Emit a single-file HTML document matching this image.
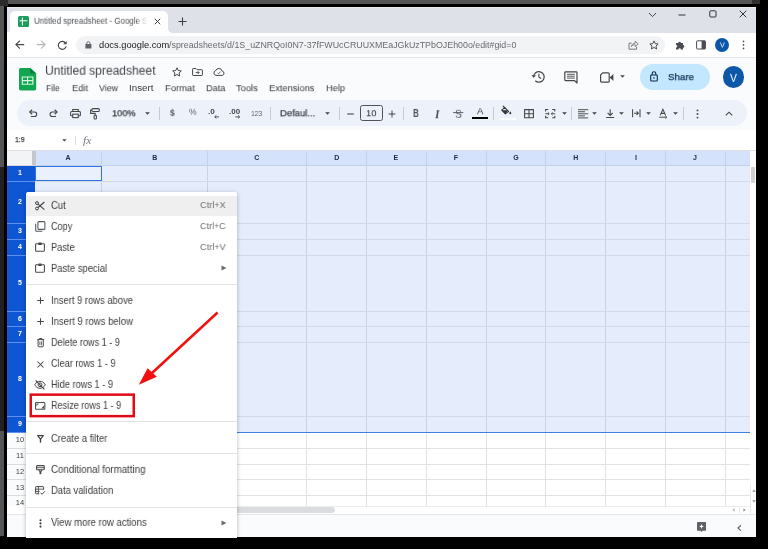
<!DOCTYPE html>
<html><head><meta charset="utf-8"><title>Untitled spreadsheet - Google Sheets</title>
<style>
html,body{margin:0;padding:0}
body{width:768px;height:549px;background:#000;overflow:hidden;position:relative;font-family:"Liberation Sans",sans-serif}
.a{position:absolute}
.tx{will-change:transform;position:absolute;white-space:nowrap;transform:translateY(-50%);line-height:1;font-family:"Liberation Sans",sans-serif}
svg{position:absolute;overflow:visible}
.hl{position:absolute;height:1px;background:#dfe3ea}
.vl{position:absolute;width:1px;background:#dfe3ea}
.rh{will-change:transform;position:absolute;left:6.2px;width:28px;background:#0b57d0;color:#fff;font-size:7px;font-weight:700;text-align:center}
.rn{will-change:transform;position:absolute;left:6.4px;width:28px;color:#444;font-size:7.5px;text-align:center}
.ch{will-change:transform;position:absolute;top:151px;height:14px;color:#1f2a3d;font-size:7px;font-weight:700;text-align:center;line-height:14px}
.sep{position:absolute;top:107px;width:1px;height:13px;background:#c7cbd1}
.serifi{font-family:"Liberation Serif",serif;font-style:italic}
.stk{-webkit-text-stroke:0.25px currentColor}
.msep{position:absolute;left:26px;width:211px;height:1px;background:#e3e3e3}
</style></head><body>
<!-- outer frame -->
<div class="a" style="left:0;top:0;width:8px;height:6px;background:#2b2b2b"></div>
<div class="a" style="left:8px;top:0;width:744px;height:3.8px;background:#555"></div>
<div class="a" style="left:752px;top:0;width:8px;height:4px;background:#2f3030"></div>
<div class="a" style="left:0;top:6px;width:3.8px;height:530px;background:#555"></div>
<div class="a" style="left:0;top:167px;width:4px;height:263.5px;background:#212121"></div>
<!-- window -->
<div class="a" id="win" style="left:6.8px;top:6.7px;width:749.3px;height:530.1px;background:#fff;overflow:hidden"></div>
<!-- tab strip -->
<div class="a" style="left:6.8px;top:6.7px;width:749.3px;height:26.3px;background:#dfe1e8"></div>
<div class="a" style="left:6.8px;top:6.7px;width:749.3px;height:1.2px;background:#eaecf0"></div>
<div class="a" style="left:10px;top:11px;width:158px;height:22px;background:#fff;border-radius:5px 5px 0 0"></div>
<div class="a" style="left:6.8px;top:29px;width:3.2px;height:4px;background:radial-gradient(circle at 0 0,#dfe1e8 3.2px,#fff 3.7px)"></div>
<div class="a" style="left:168px;top:29px;width:4px;height:4px;background:radial-gradient(circle at 100% 0,#dfe1e8 3.5px,#fff 4px)"></div>
<!-- chrome toolbar -->
<div class="a" style="left:6.8px;top:33px;width:749.3px;height:24px;background:#fff"></div>
<div class="a" style="left:7px;top:57px;width:749px;height:1px;background:#e4e6ea"></div>
<div class="a" style="left:76px;top:36px;width:589px;height:18px;background:#f1f3f4;border-radius:9px"></div>
<!-- sheets header -->
<div class="a" style="left:6.8px;top:58px;width:749.3px;height:72px;background:#f9fbfd"></div>
<div class="a" style="left:17px;top:100px;width:730px;height:26px;background:#edf2fa;border-radius:13px"></div>
<!-- formula bar -->
<div class="a" style="left:7px;top:130px;width:749px;height:20px;background:#fff"></div>
<div class="a" style="left:7px;top:150px;width:749px;height:1px;background:#dcdfe4"></div>
<div class="a" style="left:35px;top:165px;width:715px;height:267px;background:#e5edfd"></div>
<div class="a" style="left:35px;top:151px;width:715px;height:14px;background:#d4e2fb"></div>
<div class="a" style="left:7px;top:151px;width:28px;height:14px;background:#f3f4f6"></div>
<div class="a" style="left:32.4px;top:151px;width:3.2px;height:14.5px;background:#c4c7cc"></div>
<div class="a" style="left:7px;top:164.5px;width:28px;height:1px;background:#d3d6da"></div>
<div class="ch" style="left:35.4px;width:66.19999999999999px">A</div>
<div class="ch" style="left:101.6px;width:105.4px">B</div>
<div class="ch" style="left:207.0px;width:99.60000000000002px">C</div>
<div class="ch" style="left:306.6px;width:59.799999999999955px">D</div>
<div class="ch" style="left:366.4px;width:59.80000000000001px">E</div>
<div class="ch" style="left:426.2px;width:59.80000000000001px">F</div>
<div class="ch" style="left:486.0px;width:59.799999999999955px">G</div>
<div class="ch" style="left:545.8px;width:59.80000000000007px">H</div>
<div class="ch" style="left:605.6px;width:59.799999999999955px">I</div>
<div class="ch" style="left:665.4px;width:59.80000000000007px">J</div>
<div class="vl" style="left:101.1px;top:151px;height:14px;background:#c6d1e9"></div>
<div class="vl" style="left:101.1px;top:165px;height:267px;background:#cad3e6"></div>
<div class="vl" style="left:101.1px;top:433px;height:74px;background:#e2e3e5"></div>
<div class="vl" style="left:206.5px;top:151px;height:14px;background:#c6d1e9"></div>
<div class="vl" style="left:206.5px;top:165px;height:267px;background:#cad3e6"></div>
<div class="vl" style="left:206.5px;top:433px;height:74px;background:#e2e3e5"></div>
<div class="vl" style="left:306.1px;top:151px;height:14px;background:#c6d1e9"></div>
<div class="vl" style="left:306.1px;top:165px;height:267px;background:#cad3e6"></div>
<div class="vl" style="left:306.1px;top:433px;height:74px;background:#e2e3e5"></div>
<div class="vl" style="left:365.9px;top:151px;height:14px;background:#c6d1e9"></div>
<div class="vl" style="left:365.9px;top:165px;height:267px;background:#cad3e6"></div>
<div class="vl" style="left:365.9px;top:433px;height:74px;background:#e2e3e5"></div>
<div class="vl" style="left:425.7px;top:151px;height:14px;background:#c6d1e9"></div>
<div class="vl" style="left:425.7px;top:165px;height:267px;background:#cad3e6"></div>
<div class="vl" style="left:425.7px;top:433px;height:74px;background:#e2e3e5"></div>
<div class="vl" style="left:485.5px;top:151px;height:14px;background:#c6d1e9"></div>
<div class="vl" style="left:485.5px;top:165px;height:267px;background:#cad3e6"></div>
<div class="vl" style="left:485.5px;top:433px;height:74px;background:#e2e3e5"></div>
<div class="vl" style="left:545.3px;top:151px;height:14px;background:#c6d1e9"></div>
<div class="vl" style="left:545.3px;top:165px;height:267px;background:#cad3e6"></div>
<div class="vl" style="left:545.3px;top:433px;height:74px;background:#e2e3e5"></div>
<div class="vl" style="left:605.1px;top:151px;height:14px;background:#c6d1e9"></div>
<div class="vl" style="left:605.1px;top:165px;height:267px;background:#cad3e6"></div>
<div class="vl" style="left:605.1px;top:433px;height:74px;background:#e2e3e5"></div>
<div class="vl" style="left:664.9px;top:151px;height:14px;background:#c6d1e9"></div>
<div class="vl" style="left:664.9px;top:165px;height:267px;background:#cad3e6"></div>
<div class="vl" style="left:664.9px;top:433px;height:74px;background:#e2e3e5"></div>
<div class="vl" style="left:724.7px;top:151px;height:14px;background:#c6d1e9"></div>
<div class="vl" style="left:724.7px;top:165px;height:267px;background:#cad3e6"></div>
<div class="vl" style="left:724.7px;top:433px;height:74px;background:#e2e3e5"></div>
<div class="hl" style="left:35px;top:165px;width:715px;background:#c6d1e9"></div>
<div class="hl" style="left:35px;top:180.5px;width:715px;background:#d1d9ea"></div>
<div class="hl" style="left:35px;top:222.7px;width:715px;background:#d1d9ea"></div>
<div class="hl" style="left:35px;top:238.9px;width:715px;background:#d1d9ea"></div>
<div class="hl" style="left:35px;top:254.6px;width:715px;background:#d1d9ea"></div>
<div class="hl" style="left:35px;top:310.5px;width:715px;background:#d1d9ea"></div>
<div class="hl" style="left:35px;top:326.0px;width:715px;background:#d1d9ea"></div>
<div class="hl" style="left:35px;top:341.9px;width:715px;background:#d1d9ea"></div>
<div class="hl" style="left:35px;top:416.0px;width:715px;background:#d1d9ea"></div>
<div class="hl" style="left:35px;top:431.55px;width:715px;height:1.3px;background:#3f7fe0"></div>
<div class="hl" style="left:35px;top:447.6px;width:715px;background:#e2e3e5"></div>
<div class="hl" style="left:35px;top:463.5px;width:715px;background:#e2e3e5"></div>
<div class="hl" style="left:35px;top:479.3px;width:715px;background:#e2e3e5"></div>
<div class="hl" style="left:35px;top:494.8px;width:715px;background:#e2e3e5"></div>
<div class="hl" style="left:35px;top:506.5px;width:715px;background:#e2e3e5"></div>
<div class="a" style="left:6.8px;top:165.5px;width:28.2px;height:267px;background:#0f56d4"></div>
<div class="a" style="left:7px;top:432.5px;width:28px;height:74.5px;background:#fafbfc"></div>
<div class="rh" style="top:169.25px;height:8px;line-height:8px;background:none">1</div>
<div class="hl" style="left:7px;top:180.5px;width:28px;background:#5d90ee"></div>
<div class="rh" style="top:198.1px;height:8px;line-height:8px;background:none">2</div>
<div class="hl" style="left:7px;top:222.7px;width:28px;background:#5d90ee"></div>
<div class="rh" style="top:227.3px;height:8px;line-height:8px;background:none">3</div>
<div class="hl" style="left:7px;top:238.9px;width:28px;background:#5d90ee"></div>
<div class="rh" style="top:243.25px;height:8px;line-height:8px;background:none">4</div>
<div class="hl" style="left:7px;top:254.6px;width:28px;background:#5d90ee"></div>
<div class="rh" style="top:279.05px;height:8px;line-height:8px;background:none">5</div>
<div class="hl" style="left:7px;top:310.5px;width:28px;background:#5d90ee"></div>
<div class="rh" style="top:314.75px;height:8px;line-height:8px;background:none">6</div>
<div class="hl" style="left:7px;top:326.0px;width:28px;background:#5d90ee"></div>
<div class="rh" style="top:330.45px;height:8px;line-height:8px;background:none">7</div>
<div class="hl" style="left:7px;top:341.9px;width:28px;background:#5d90ee"></div>
<div class="rh" style="top:375.45px;height:8px;line-height:8px;background:none">8</div>
<div class="hl" style="left:7px;top:416.0px;width:28px;background:#5d90ee"></div>
<div class="rh" style="top:420.4px;height:8px;line-height:8px;background:none">9</div>
<div class="hl" style="left:7px;top:431.8px;width:28px;background:#5d90ee"></div>
<div class="rn" style="top:436.20000000000005px;height:8px;line-height:8px">10</div>
<div class="hl" style="left:7px;top:447.6px;width:28px;background:#d9dbde"></div>
<div class="rn" style="top:452.05px;height:8px;line-height:8px">11</div>
<div class="hl" style="left:7px;top:463.5px;width:28px;background:#d9dbde"></div>
<div class="rn" style="top:467.9px;height:8px;line-height:8px">12</div>
<div class="hl" style="left:7px;top:479.3px;width:28px;background:#d9dbde"></div>
<div class="rn" style="top:483.55px;height:8px;line-height:8px">13</div>
<div class="hl" style="left:7px;top:494.8px;width:28px;background:#d9dbde"></div>
<div class="rn" style="top:499.15px;height:8px;line-height:8px">14</div>
<div class="hl" style="left:7px;top:506.5px;width:28px;background:#d9dbde"></div>
<div class="vl" style="left:34.5px;top:433px;height:74px;background:#d9dbde"></div>
<div class="a" style="left:35.4px;top:165.8px;width:66.5px;height:15px;box-sizing:border-box;border:1.3px solid #2c74e4;background:#eaf1fd"></div>
<div class="a" style="left:750px;top:151px;width:6px;height:356px;background:#fff"></div>
<div class="a" style="left:751.3px;top:167px;width:4px;height:16px;background:#cfd1d4;border-radius:1px"></div>
<div class="a" style="left:7px;top:506.3px;width:749px;height:7.7px;background:#fff"></div>
<div class="a" style="left:35px;top:505.8px;width:715px;height:1px;background:#ebecee"></div>
<div class="a" style="left:60px;top:507.3px;width:275px;height:5.6px;background:#dadce0;border-radius:3px"></div>
<div class="a" style="left:7px;top:514px;width:749px;height:1px;background:#e3e5e8"></div>
<div class="a" style="left:7px;top:515px;width:749px;height:22px;background:#f9fbfd"></div>
<!-- ===== chrome icons ===== -->
<!-- favicon -->
<svg style="left:18px;top:16px" width="11" height="11" viewBox="0 0 11 11"><rect x="0" y="0" width="11" height="11" rx="1.6" fill="#1c9d5b"/><path d="M1.6 4.8 H9.4 M4.4 1.6 V9.4" stroke="#fff" stroke-width="1.1" fill="none"/></svg>
<!-- tab close -->
<svg style="left:154px;top:18px" width="7" height="7" viewBox="0 0 7 7"><path d="M0.8 0.8 L6.2 6.2 M6.2 0.8 L0.8 6.2" stroke="#3c4043" stroke-width="1" fill="none"/></svg>
<!-- new tab plus -->
<svg style="left:178px;top:17px" width="9" height="9" viewBox="0 0 9 9"><path d="M4.5 0.5 V8.5 M0.5 4.5 H8.5" stroke="#3c4043" stroke-width="1.1" fill="none"/></svg>
<!-- window controls -->
<svg style="left:647.5px;top:11.6px" width="9" height="6" viewBox="0 0 9 6"><path d="M1 1 L4.5 4.6 L8 1" stroke="#333" stroke-width="0.9" fill="none"/></svg>
<svg style="left:678px;top:13.6px" width="8" height="2" viewBox="0 0 8 2"><path d="M0.5 1 H7.5" stroke="#222" stroke-width="0.9"/></svg>
<svg style="left:708.5px;top:10.2px" width="8" height="8" viewBox="0 0 8 8"><rect x="0.8" y="0.8" width="6.2" height="6.2" rx="0.8" stroke="#222" stroke-width="0.9" fill="none"/></svg>
<svg style="left:738.5px;top:10.2px" width="8" height="8" viewBox="0 0 8 8"><path d="M0.7 0.7 L7.3 7.3 M7.3 0.7 L0.7 7.3" stroke="#222" stroke-width="0.9" fill="none"/></svg>
<!-- back -->
<svg style="left:15px;top:40px" width="10" height="10" viewBox="0 0 10 10"><path d="M9.2 4.6 H1.2 M4.9 0.6 L0.9 4.6 L4.9 8.6" stroke="#454749" stroke-width="1.1" fill="none"/></svg>
<!-- forward -->
<svg style="left:36px;top:40px" width="10" height="10" viewBox="0 0 10 10"><path d="M0.8 4.6 H8.8 M5.1 0.6 L9.1 4.6 L5.1 8.6" stroke="#b4b6b9" stroke-width="1.1" fill="none"/></svg>
<!-- reload -->
<svg style="left:56.5px;top:39.5px" width="11" height="11" viewBox="0 0 11 11"><path d="M8.6 3.0 A4 4 0 1 0 9.2 6.4" stroke="#454749" stroke-width="1.15" fill="none"/><path d="M9.6 0.9 V4.3 H6.2 Z" fill="#454749"/></svg>
<!-- lock -->
<svg style="left:85px;top:40.5px" width="7" height="8" viewBox="0 0 7 8"><rect x="0.4" y="3" width="6" height="4.6" rx="0.6" fill="#5f6368"/><path d="M1.8 3.2 V2.2 A1.6 1.6 0 0 1 5 2.2 V3.2" stroke="#5f6368" stroke-width="0.9" fill="none"/></svg>
<!-- share (url) -->
<svg style="left:628px;top:40px" width="11" height="10" viewBox="0 0 11 10"><path d="M3.6 3.2 H1 V9.2 H8.6 V6.6" stroke="#6a6d71" stroke-width="0.9" fill="none"/><path d="M3.4 6.6 C3.6 4.4 5 3.3 7.2 3.2 V1.2 L10.2 3.9 L7.2 6.5 V4.7 C5.6 4.7 4.4 5.2 3.4 6.6 Z" stroke="#6a6d71" stroke-width="0.8" fill="none"/></svg>
<!-- star (url) -->
<svg style="left:649px;top:40px" width="10" height="10" viewBox="0 0 10 10"><path d="M5 0.9 L6.25 3.65 L9.2 4 L7 6 L7.6 8.95 L5 7.45 L2.4 8.95 L3 6 L0.8 4 L3.75 3.65 Z" stroke="#454749" stroke-width="0.95" fill="none" stroke-linejoin="round"/></svg>
<!-- puzzle -->
<svg style="left:675px;top:40px" width="10" height="10" viewBox="0 0 10 10"><path d="M1 3 H3.3 A1.3 1.3 0 1 1 5.9 3 H8 V5.1 A1.3 1.3 0 1 1 8 7.7 V9.5 H5.9 A1.25 1.25 0 1 0 3.4 9.5 H1 V7.4 A1.25 1.25 0 1 0 1 4.9 Z" fill="#4a4d51"/></svg>
<!-- side panel -->
<svg style="left:696px;top:40px" width="10" height="10" viewBox="0 0 10 10"><rect x="0.6" y="0.8" width="8.8" height="8.2" rx="0.7" stroke="#4a4d51" stroke-width="1" fill="none"/><rect x="5.6" y="0.8" width="3.8" height="8.2" fill="#4a4d51"/></svg>
<!-- avatar small -->
<div class="a" style="left:714.8px;top:37.6px;width:14.6px;height:14.6px;border-radius:50%;background:#0c57a8"></div>
<!-- 3 dots -->
<svg style="left:742px;top:40px" width="3" height="10" viewBox="0 0 3 10"><circle cx="1.5" cy="1.4" r="0.85" fill="#4a4d51"/><circle cx="1.5" cy="4.9" r="0.85" fill="#4a4d51"/><circle cx="1.5" cy="8.4" r="0.85" fill="#4a4d51"/></svg>
<!-- ===== sheets header icons ===== -->
<!-- sheets logo -->
<svg style="left:19px;top:67.5px" width="17.2" height="22.4" viewBox="0 0 17.2 22.4"><path d="M1.6 0 H11.2 L17.2 5.6 V20.8 A1.6 1.6 0 0 1 15.6 22.4 H1.6 A1.6 1.6 0 0 1 0 20.8 V1.6 A1.6 1.6 0 0 1 1.6 0 Z" fill="#12a653"/><path d="M11.2 0 L17.2 5.6 H12.4 A1.2 1.2 0 0 1 11.2 4.4 Z" fill="#0b7f3f"/><path d="M3.3 9 H13.9 V16.3 H3.3 Z M3.3 12.65 H13.9 M8.6 9 V16.3" stroke="#d9f6e4" stroke-width="1.15" fill="none"/></svg>
<!-- star -->
<svg style="left:171.6px;top:66.8px" width="10" height="10" viewBox="0 0 10 10"><path d="M5 0.8 L6.3 3.6 L9.3 3.95 L7.05 6 L7.65 9 L5 7.5 L2.35 9 L2.95 6 L0.7 3.95 L3.7 3.6 Z" stroke="#444746" stroke-width="1" fill="none" stroke-linejoin="round"/></svg>
<!-- move folder -->
<svg style="left:192px;top:67.5px" width="11" height="8" viewBox="0 0 11 8"><path d="M0.6 1.2 A0.6 0.6 0 0 1 1.2 0.5 H4 L5.1 1.7 H9.8 A0.6 0.6 0 0 1 10.4 2.3 V6.9 A0.6 0.6 0 0 1 9.8 7.5 H1.2 A0.6 0.6 0 0 1 0.6 6.9 Z" stroke="#444746" stroke-width="1" fill="none"/><path d="M3.6 4.6 H7 M5.8 3.2 L7.2 4.6 L5.8 6" stroke="#444746" stroke-width="0.9" fill="none"/></svg>
<!-- cloud -->
<svg style="left:213px;top:67.5px" width="12" height="8" viewBox="0 0 12 8"><path d="M3 7.4 A2.4 2.4 0 0 1 2.7 2.7 A3.4 3.4 0 0 1 9.2 3.1 A2.2 2.2 0 0 1 9.3 7.4 Z" stroke="#444746" stroke-width="1" fill="none"/><path d="M4.6 4.8 L5.6 5.8 L7.5 3.7" stroke="#444746" stroke-width="0.8" fill="none"/></svg>
<!-- history -->
<svg style="left:531px;top:70px" width="15" height="14" viewBox="0 0 15 14"><path d="M2.6 6.9 A5.3 5.3 0 1 1 4.3 10.8" stroke="#444746" stroke-width="1.25" fill="none"/><path d="M0.4 5.2 L2.6 7.8 L5 5.3 Z" fill="#444746"/><path d="M7.9 3.8 V7.1 L10.2 8.5" stroke="#444746" stroke-width="1.1" fill="none"/></svg>
<!-- comment -->
<svg style="left:563.5px;top:71px" width="14" height="13" viewBox="0 0 14 13"><path d="M1.6 0.8 H12.2 A0.8 0.8 0 0 1 13 1.6 V12 L10.6 9.6 H1.6 A0.8 0.8 0 0 1 0.8 8.8 V1.6 A0.8 0.8 0 0 1 1.6 0.8 Z" stroke="#444746" stroke-width="1.2" fill="none" stroke-linejoin="round"/><path d="M3 3.3 H10.8 M3 5.2 H10.8 M3 7.1 H10.8" stroke="#444746" stroke-width="0.9"/></svg>
<!-- camera -->
<svg style="left:599.5px;top:72px" width="14" height="11" viewBox="0 0 14 11"><path d="M2.6 0.8 H8.2 A1 1 0 0 1 9.2 1.8 V9.2 A1 1 0 0 1 8.2 10.2 H1.6 A1 1 0 0 1 0.6 9.2 V2.8 Z" stroke="#444746" stroke-width="1.2" fill="none" stroke-linejoin="round"/><path d="M9.6 5.5 L13.4 2 V9 Z" fill="#444746"/></svg>
<svg style="left:620px;top:75.3px" width="5" height="3" viewBox="0 0 5 3"><path d="M0.2 0.2 H4.8 L2.5 2.7 Z" fill="#444746"/></svg>
<!-- share button -->
<div class="a" style="left:640.3px;top:64px;width:70.2px;height:26px;border-radius:13px;background:#c2e7ff"></div>
<svg style="left:650px;top:71px" width="8" height="11" viewBox="0 0 8 11"><rect x="0.7" y="4" width="6.6" height="6" rx="0.8" stroke="#0b2a4a" stroke-width="1.1" fill="none"/><path d="M2.2 4 V2.6 A1.8 1.8 0 0 1 5.8 2.6 V4" stroke="#0b2a4a" stroke-width="1.1" fill="none"/><circle cx="4" cy="7" r="0.8" fill="#0b2a4a"/></svg>
<!-- avatar big -->
<div class="a" style="left:722.8px;top:66.3px;width:21.4px;height:21.4px;border-radius:50%;background:#0c57a8"></div>
<!-- ===== toolbar icons ===== -->
<!-- undo -->
<svg style="left:28.5px;top:109.2px" width="8.8" height="8.8" viewBox="0 0 9 9"><path d="M1.6 3.1 H5.6 A2.3 2.3 0 0 1 5.6 7.7 H1.8" stroke="#444746" stroke-width="1.15" fill="none"/><path d="M3.2 0.8 L0.7 3.1 L3.2 5.4" stroke="#444746" stroke-width="1.15" fill="none"/></svg>
<!-- redo -->
<svg style="left:49.2px;top:109.2px" width="8.8" height="8.8" viewBox="0 0 9 9"><path d="M7.4 3.1 H3.4 A2.3 2.3 0 0 0 3.4 7.7 H7.2" stroke="#444746" stroke-width="1.15" fill="none"/><path d="M5.8 0.8 L8.3 3.1 L5.8 5.4" stroke="#444746" stroke-width="1.15" fill="none"/></svg>
<!-- print -->
<svg style="left:69.5px;top:108.7px" width="11" height="9.2" viewBox="0 0 11.4 9.6"><path d="M2.8 2.6 V0.6 H8.6 V2.6" stroke="#444746" stroke-width="1.1" fill="none"/><path d="M2.6 7 H1.2 A0.6 0.6 0 0 1 0.6 6.4 V3.6 A1 1 0 0 1 1.6 2.6 H9.8 A1 1 0 0 1 10.8 3.6 V6.4 A0.6 0.6 0 0 1 10.2 7 H8.8" stroke="#444746" stroke-width="1.1" fill="none"/><rect x="2.8" y="5.4" width="5.8" height="3.6" stroke="#444746" stroke-width="1.1" fill="none"/></svg>
<!-- paint roller -->
<svg style="left:90.4px;top:108px" width="10" height="11.6" viewBox="0 0 10 11.6"><rect x="1.9" y="0.6" width="7.4" height="2.9" rx="1" stroke="#444746" stroke-width="1.1" fill="none"/><path d="M1.9 2 H0.6 V5.4 H5.2 V7.2" stroke="#444746" stroke-width="1.05" fill="none"/><rect x="4.1" y="7.2" width="2.3" height="3.8" rx="0.8" stroke="#444746" stroke-width="1.05" fill="none"/></svg>
<!-- zoom arrow -->
<svg style="left:145.2px;top:111.9px" width="5" height="3" viewBox="0 0 5 3"><path d="M0.1 0.2 H4.9 L2.5 2.8 Z" fill="#444746"/></svg>
<div class="sep" style="left:158.7px"></div>
<!-- decimal dec/inc -->
<svg style="left:213.8px;top:114.6px" width="5.4" height="3.8" viewBox="0 0 6 4"><path d="M5.6 2 H1 M2.6 0.4 L0.8 2 L2.6 3.6" stroke="#444746" stroke-width="1" fill="none"/></svg>
<svg style="left:235px;top:114.6px" width="5.4" height="3.8" viewBox="0 0 6 4"><path d="M0.4 2 H5 M3.4 0.4 L5.2 2 L3.4 3.6" stroke="#444746" stroke-width="1" fill="none"/></svg>
<div class="sep" style="left:270.2px"></div>
<svg style="left:324.6px;top:112.4px" width="5" height="3" viewBox="0 0 5 3"><path d="M0.1 0.2 H4.9 L2.5 2.8 Z" fill="#444746"/></svg>
<div class="sep" style="left:338.8px"></div>
<!-- minus -->
<svg style="left:346.5px;top:112.6px" width="7" height="2" viewBox="0 0 7 2"><path d="M0.2 1 H6.8" stroke="#444746" stroke-width="1.1"/></svg>
<!-- size box -->
<div class="a" style="left:360.2px;top:105px;width:22.6px;height:15.6px;box-sizing:border-box;border:1px solid #50545a;border-radius:2.5px"></div>
<!-- plus -->
<svg style="left:388.1px;top:109.5px" width="8" height="8" viewBox="0 0 8 8"><path d="M4 0.6 V7.4 M0.6 4 H7.4" stroke="#444746" stroke-width="1" fill="none"/></svg>
<div class="sep" style="left:403px"></div>
<!-- strikethrough S line -->
<svg style="left:453px;top:112.3px" width="10.4" height="1.2" viewBox="0 0 10.4 1.2"><path d="M0 0.6 H10.4" stroke="#5a5e63" stroke-width="1"/></svg>
<!-- text color bar -->
<div class="a" style="left:472.4px;top:116.9px;width:15.5px;height:2.4px;background:#000"></div>
<div class="sep" style="left:493.2px"></div>
<!-- fill bucket -->
<svg style="left:501.4px;top:105.2px" width="11" height="10" viewBox="0 0 11 10"><path d="M1.9 1 L7.6 6.4 L4.4 8.9 L0.7 5.2 L4.3 2.2" stroke="#2f3236" stroke-width="1.05" fill="none" stroke-linejoin="round"/><path d="M0.8 5.3 H7.2 L4.4 8.7 Z" fill="#2f3236"/><path d="M9.3 6.2 C9.9 7.2 10.3 7.7 10.3 8.2 A1 1 0 0 1 8.3 8.2 C8.3 7.7 8.7 7.2 9.3 6.2 Z" fill="#2f3236"/></svg>
<div class="a" style="left:500.2px;top:117.6px;width:15.4px;height:2.3px;background:#fdfeff"></div>
<!-- borders -->
<svg style="left:524px;top:109px" width="10" height="9.4" viewBox="0 0 10 9.4"><path d="M0.6 0.6 H9.4 V8.8 H0.6 Z M5 0.6 V8.8 M0.6 4.7 H9.4" stroke="#444746" stroke-width="1.1" fill="none"/></svg>
<!-- merge -->
<svg style="left:545.4px;top:109px" width="10.4" height="9.4" viewBox="0 0 10.4 9.4"><path d="M0.6 2.6 V0.6 H3.2 M7.2 0.6 H9.8 V2.6 M9.8 6.8 V8.8 H7.2 M3.2 8.8 H0.6 V6.8" stroke="#444746" stroke-width="1.05" fill="none"/><path d="M0.3 4.7 H4 M2.8 3.4 L4.2 4.7 L2.8 6 M10.1 4.7 H6.4 M7.6 3.4 L6.2 4.7 L7.6 6" stroke="#444746" stroke-width="0.95" fill="none"/></svg>
<svg style="left:562.2px;top:112px" width="5" height="3" viewBox="0 0 5 3"><path d="M0.1 0.2 H4.9 L2.5 2.8 Z" fill="#444746"/></svg>
<div class="sep" style="left:571px"></div>
<!-- halign -->
<svg style="left:577.8px;top:108.8px" width="10.4" height="9.6" viewBox="0 0 10.4 9.6"><path d="M0 0.7 H10.2 M0 2.75 H7 M0 4.8 H10.2 M0 6.85 H7 M0 8.9 H10.2" stroke="#444746" stroke-width="0.95"/></svg>
<svg style="left:592.3px;top:112px" width="5" height="3" viewBox="0 0 5 3"><path d="M0.1 0.2 H4.9 L2.5 2.8 Z" fill="#444746"/></svg>
<!-- valign -->
<svg style="left:605.8px;top:108.8px" width="8.4" height="9.4" viewBox="0 0 8.4 9.4"><path d="M4.2 0.2 V6.2 M1.6 3.8 L4.2 6.4 L6.8 3.8 M0.2 8.6 H8.2" stroke="#444746" stroke-width="1.05" fill="none"/></svg>
<svg style="left:619px;top:112px" width="5" height="3" viewBox="0 0 5 3"><path d="M0.1 0.2 H4.9 L2.5 2.8 Z" fill="#444746"/></svg>
<!-- wrap -->
<svg style="left:632.4px;top:109.4px" width="8.6" height="8.4" viewBox="0 0 8.6 8.4"><path d="M0.6 0.2 V8.2 M8 0.2 V8.2 M2 4.2 H6.2 M4.6 2.4 L6.4 4.2 L4.6 6" stroke="#444746" stroke-width="1.05" fill="none"/></svg>
<svg style="left:646.2px;top:112px" width="5" height="3" viewBox="0 0 5 3"><path d="M0.1 0.2 H4.9 L2.5 2.8 Z" fill="#444746"/></svg>
<!-- rotate -->
<svg style="left:659.4px;top:108.8px" width="8.6" height="9.6" viewBox="0 0 8.6 9.6"><path d="M1.2 6.4 L3.9 0.4 L6.6 6.4 M2.1 4.4 H5.7" stroke="#444746" stroke-width="1.05" fill="none"/><path d="M0.2 8.2 H7.6 M6.2 6.8 L7.8 8.2 L6.2 9.4" stroke="#444746" stroke-width="0.95" fill="none"/></svg>
<svg style="left:673px;top:112px" width="5" height="3" viewBox="0 0 5 3"><path d="M0.1 0.2 H4.9 L2.5 2.8 Z" fill="#444746"/></svg>
<div class="sep" style="left:683.2px"></div>
<!-- more -->
<svg style="left:695.6px;top:108.6px" width="3" height="10" viewBox="0 0 3 10"><circle cx="1.5" cy="1.4" r="0.95" fill="#444746"/><circle cx="1.5" cy="5" r="0.95" fill="#444746"/><circle cx="1.5" cy="8.6" r="0.95" fill="#444746"/></svg>
<!-- collapse -->
<svg style="left:724.6px;top:110.8px" width="8" height="5" viewBox="0 0 8 5"><path d="M0.8 4.4 L4 1.2 L7.2 4.4" stroke="#444746" stroke-width="1.15" fill="none"/></svg>
<!-- formula bar -->
<svg style="left:62px;top:139.3px" width="4.8" height="2.8" viewBox="0 0 5 3"><path d="M0.1 0.2 H4.9 L2.5 2.8 Z" fill="#444746"/></svg>
<div class="a" style="left:75px;top:136.4px;width:1px;height:9px;background:#d5d8dc"></div>
<!-- bottom bar icons -->
<svg style="left:697.2px;top:522.2px" width="9" height="10" viewBox="0 0 9 10"><path d="M0.6 0 H8.4 A0.6 0.6 0 0 1 9 0.6 V8.2 A0.6 0.6 0 0 1 8.4 8.8 H5.6 L4.5 9.9 L3.4 8.8 H0.6 A0.6 0.6 0 0 1 0 8.2 V0.6 A0.6 0.6 0 0 1 0.6 0 Z" fill="#5f6368"/><path d="M4.5 1.9 L5.2 3.7 L7 4.4 L5.2 5.1 L4.5 6.9 L3.8 5.1 L2 4.4 L3.8 3.7 Z" fill="#fff"/></svg>
<svg style="left:736.8px;top:524.8px" width="4.6" height="6.4" viewBox="0 0 5 7"><path d="M4.3 0.5 L1 3.3 L4.3 6.1" stroke="#5f6368" stroke-width="1.25" fill="none"/></svg>
<!-- scroll arrows -->
<svg style="left:732.4px;top:508px" width="3" height="4" viewBox="0 0 3 4"><path d="M2.6 0.2 V3.8 L0.3 2 Z" fill="#b6b9bd"/></svg>
<svg style="left:743px;top:508px" width="3" height="4" viewBox="0 0 3 4"><path d="M0.4 0.2 V3.8 L2.7 2 Z" fill="#8d9196"/></svg>
<div class="a" style="left:739.2px;top:507px;width:1px;height:6px;background:#e8eaed"></div>
<div class="a" style="left:749.6px;top:484px;width:1px;height:30px;background:#e8eaed"></div>
<svg style="left:752px;top:499.6px" width="4" height="3" viewBox="0 0 4 3"><path d="M0.2 0.3 H3.8 L2 2.6 Z" fill="#8d9196"/></svg>
<svg style="left:752px;top:488.6px" width="4" height="3" viewBox="0 0 4 3"><path d="M0.2 2.7 H3.8 L2 0.4 Z" fill="#8d9196"/></svg>

<!-- context menu -->
<div class="a" style="left:26px;top:191.5px;width:211px;height:346px;background:#fff;box-shadow:0 1px 4px rgba(0,0,0,.28);border-radius:2px 2px 0 0"></div>
<div class="a" style="left:26px;top:195.5px;width:211px;height:20.5px;background:#efefef"></div>
<div class="msep" style="top:284px"></div>
<div class="msep" style="top:421px"></div>
<div class="msep" style="top:453px"></div>
<div class="msep" style="top:507px"></div>
<!-- submenu arrows -->
<svg style="left:221px;top:265px" width="6" height="6" viewBox="0 0 6 6"><path d="M0.5 0.6 L5.5 3 L0.5 5.4 Z" fill="#6b6b6b"/></svg>
<svg style="left:221px;top:519.5px" width="6" height="6" viewBox="0 0 6 6"><path d="M0.5 0.6 L5.5 3 L0.5 5.4 Z" fill="#6b6b6b"/></svg>
<!-- red highlight box -->
<svg style="left:0;top:0" width="768" height="549" viewBox="0 0 768 549"><rect x="30.75" y="394.65" width="103" height="21.5" fill="none" stroke="#e00b16" stroke-width="2.5"/></svg>
<!-- red arrow -->
<svg style="left:0;top:0" width="768" height="549" viewBox="0 0 768 549"><path d="M217.6 312.5 L151.5 373.5" stroke="#f20f0f" stroke-width="2.5" fill="none"/><path d="M138.8 384.8 L147.6 368.2 L156.8 376.8 Z" fill="#f20f0f"/></svg>
<!-- menu icons -->
<!-- scissors -->
<svg style="left:34.8px;top:200.6px" width="10" height="9.6" viewBox="0 0 10 9.6"><circle cx="2" cy="2.1" r="1.45" stroke="#3c3f43" stroke-width="1" fill="none"/><circle cx="2" cy="7.5" r="1.45" stroke="#3c3f43" stroke-width="1" fill="none"/><path d="M3.1 3.1 L9.4 8.6 M3.1 6.5 L9.4 1" stroke="#3c3f43" stroke-width="1.05" fill="none"/></svg>
<!-- copy -->
<svg style="left:34.8px;top:221.2px" width="10.6" height="10.8" viewBox="0 0 10.6 10.8"><rect x="2.9" y="0.6" width="7" height="7.8" rx="1" stroke="#55595e" stroke-width="1.05" fill="none"/><path d="M0.7 2.8 V9.2 A1 1 0 0 0 1.7 10.2 H7.4" stroke="#55595e" stroke-width="1.05" fill="none"/></svg>
<!-- paste -->
<svg style="left:35.2px;top:242.2px" width="10" height="9.8" viewBox="0 0 10 9.8"><path d="M3.2 1.7 H1.4 A0.8 0.8 0 0 0 0.6 2.5 V8.4 A0.8 0.8 0 0 0 1.4 9.2 H8.6 A0.8 0.8 0 0 0 9.4 8.4 V2.5 A0.8 0.8 0 0 0 8.6 1.7 H6.8" stroke="#444746" stroke-width="1.05" fill="none"/><rect x="3.2" y="0.4" width="3.6" height="2.6" rx="0.5" fill="#444746"/></svg>
<svg style="left:35.2px;top:263.4px" width="10" height="9.8" viewBox="0 0 10 9.8"><path d="M3.2 1.7 H1.4 A0.8 0.8 0 0 0 0.6 2.5 V8.4 A0.8 0.8 0 0 0 1.4 9.2 H8.6 A0.8 0.8 0 0 0 9.4 8.4 V2.5 A0.8 0.8 0 0 0 8.6 1.7 H6.8" stroke="#444746" stroke-width="1.05" fill="none"/><rect x="3.2" y="0.4" width="3.6" height="2.6" rx="0.5" fill="#444746"/></svg>
<!-- plus x2 -->
<svg style="left:36.8px;top:297.2px" width="7" height="7" viewBox="0 0 7 7"><path d="M3.5 0.2 V6.8 M0.2 3.5 H6.8" stroke="#444746" stroke-width="1.05" fill="none"/></svg>
<svg style="left:36.8px;top:318.2px" width="7" height="7" viewBox="0 0 7 7"><path d="M3.5 0.2 V6.8 M0.2 3.5 H6.8" stroke="#444746" stroke-width="1.05" fill="none"/></svg>
<!-- trash -->
<svg style="left:36.6px;top:338.2px" width="7.4" height="9.4" viewBox="0 0 7.4 9.4"><path d="M0.2 1.6 H7.2 M2.5 1.4 V0.5 H4.9 V1.4" stroke="#444746" stroke-width="1" fill="none"/><path d="M1.1 1.8 V8 A0.8 0.8 0 0 0 1.9 8.8 H5.5 A0.8 0.8 0 0 0 6.3 8 V1.8" stroke="#444746" stroke-width="1" fill="none"/><path d="M2.9 3.4 V7.2 M4.5 3.4 V7.2" stroke="#444746" stroke-width="0.8"/></svg>
<!-- x -->
<svg style="left:36.8px;top:360.8px" width="7" height="7" viewBox="0 0 7 7"><path d="M0.5 0.5 L6.5 6.5 M6.5 0.5 L0.5 6.5" stroke="#444746" stroke-width="1.05" fill="none"/></svg>
<!-- eye slash -->
<svg style="left:34px;top:380px" width="12" height="10" viewBox="0 0 12 10"><path d="M0.7 4.8 C2.2 2.2 4 1.3 6 1.3 C8 1.3 9.8 2.2 11.3 4.8 C9.8 7.4 8 8.3 6 8.3 C4 8.3 2.2 7.4 0.7 4.8 Z" stroke="#444746" stroke-width="1" fill="none"/><circle cx="6" cy="4.8" r="1.9" stroke="#444746" stroke-width="1" fill="none"/><path d="M1.6 0.4 L10.4 9.4" stroke="#444746" stroke-width="1.1"/></svg>
<!-- resize -->
<svg style="left:35px;top:402.2px" width="10.4" height="7.8" viewBox="0 0 10.4 7.8"><rect x="0.55" y="0.55" width="9.3" height="6.7" rx="0.6" stroke="#4d5458" stroke-width="1.1" fill="none"/><path d="M1.4 1.4 H4.2 L1.4 4.2 Z" fill="#66736c"/><path d="M9 6.4 H6.2 L9 3.6 Z" fill="#4d5458"/></svg>
<!-- filter -->
<svg style="left:36.8px;top:434.8px" width="7" height="8" viewBox="0 0 7 8"><path d="M0.6 0.6 H6.4 L3.5 4.2 Z" stroke="#3c3f43" stroke-width="1.05" fill="none" stroke-linejoin="round"/><path d="M3.5 4 V7.6" stroke="#3c3f43" stroke-width="1.4"/></svg>
<!-- conditional formatting -->
<svg style="left:35.8px;top:465.4px" width="8.8" height="9.4" viewBox="0 0 8.8 9.4"><rect x="0.6" y="0.6" width="7.6" height="4.2" rx="0.7" stroke="#444746" stroke-width="1.1" fill="none"/><path d="M0.6 2.7 H8.2" stroke="#444746" stroke-width="0.9"/><path d="M3.2 4.8 V6.2 H5.6 V4.8" stroke="#444746" stroke-width="1" fill="none"/><rect x="3.5" y="6.2" width="1.8" height="3" fill="#444746"/></svg>
<!-- data validation -->
<svg style="left:35.4px;top:486.4px" width="10.4" height="9.2" viewBox="0 0 10.4 9.2"><path d="M8.6 3.6 V1.2 A0.6 0.6 0 0 0 8 0.6 H1.2 A0.6 0.6 0 0 0 0.6 1.2 V7.2 A0.6 0.6 0 0 0 1.2 7.8 H4.2" stroke="#444746" stroke-width="1" fill="none"/><path d="M0.6 3.2 H8.6 M0.6 5.5 H4.6 M3.4 0.6 V7.8" stroke="#444746" stroke-width="0.85" fill="none"/><path d="M5.6 6.8 L7.1 8.3 L9.9 5.3" stroke="#444746" stroke-width="1" fill="none"/></svg>
<!-- 3 dots -->
<svg style="left:39px;top:519px" width="3" height="9" viewBox="0 0 3 9"><circle cx="1.5" cy="1.2" r="1.05" fill="#3c3f43"/><circle cx="1.5" cy="4.4" r="1.05" fill="#3c3f43"/><circle cx="1.5" cy="7.6" r="1.05" fill="#3c3f43"/></svg>

<span class="tx tabtxt" id="t0" style="left:34.3px;top:20.80px;font-size:8.4px;color:#4a4d51;font-weight:400;transform-origin:0 50%;transform:translateY(-50%) scaleX(0.9532)">Untitled spreadsheet - Google S</span>
<span class="tx" id="t1" style="left:98.8px;top:45.20px;font-size:8.7px;color:#202124;font-weight:400;transform-origin:0 50%;transform:translateY(-50%) scaleX(1.0698)">docs.google.com</span>
<span class="tx" id="t2" style="left:169px;top:45.20px;font-size:8.7px;color:#686c71;font-weight:400;transform-origin:0 50%;transform:translateY(-50%) scaleX(1.0182)">/spreadsheets/d/1S_uZNRQoI0N7-37fFWUcCRUUXMEaJGkUzTPbOJEh00o/edit#gid=0</span>
<span class="tx" id="t3" style="left:719.6px;top:45.30px;font-size:7.2px;color:#fff;font-weight:400;transform-origin:0 50%;transform:translateY(-50%) scaleX(0.9990)">V</span>
<span class="tx" id="t4" style="left:730.1px;top:78.60px;font-size:10.4px;color:#fff;font-weight:400;transform-origin:0 50%;transform:translateY(-50%) scaleX(0.9990)">V</span>
<span class="tx" id="t5" style="left:208.4px;top:112.30px;font-size:7.8px;color:#444746;font-weight:700;transform-origin:0 50%;transform:translateY(-50%) scaleX(1.0447)">.0</span>
<span class="tx" id="t6" style="left:229.3px;top:112.30px;font-size:7.8px;color:#444746;font-weight:700;transform-origin:0 50%;transform:translateY(-50%) scaleX(1.0247)">.00</span>
<span class="tx" id="t7" style="left:413.3px;top:114.20px;font-size:10.2px;color:#4a4d52;font-weight:700;transform-origin:0 50%;transform:translateY(-50%) scaleX(0.7753)">B</span>
<span class="tx serifi" id="t8" style="left:434.6px;top:114.91px;font-size:11.5px;color:#4a4d52;font-weight:700;transform-origin:0 50%;transform:translateY(-50%) scaleX(0.9990)">I</span>
<span class="tx" id="t9" style="left:455.0px;top:114.60px;font-size:10.4px;color:#5a5e63;font-weight:400;transform-origin:0 50%;transform:translateY(-50%) scaleX(0.9990)">S</span>
<span class="tx" id="t10" style="left:476.6px;top:110.80px;font-size:9.6px;color:#33363a;font-weight:400;transform-origin:0 50%;transform:translateY(-50%) scaleX(0.9990)">A</span>
<span class="tx serifi" id="t11" style="left:82.6px;top:140.69px;font-size:10.4px;color:#777b80;font-weight:400;transform-origin:0 50%;transform:translateY(-50%) scaleX(1.1211)">fx</span>
<span class="tx" id="t12" style="left:45.2px;top:71.30px;font-size:12.5px;color:#3f4246;font-weight:400;transform-origin:0 50%;transform:translateY(-50%) scaleX(0.9638)">Untitled spreadsheet</span>
<span class="tx" id="t13" style="left:46.3px;top:87.60px;font-size:9.7px;color:#35383c;font-weight:400;transform-origin:0 50%;transform:translateY(-50%) scaleX(0.8777)">File</span>
<span class="tx" id="t14" style="left:71.5px;top:87.60px;font-size:9.7px;color:#35383c;font-weight:400;transform-origin:0 50%;transform:translateY(-50%) scaleX(0.9589)">Edit</span>
<span class="tx" id="t15" style="left:98.8px;top:87.60px;font-size:9.7px;color:#35383c;font-weight:400;transform-origin:0 50%;transform:translateY(-50%) scaleX(0.9131)">View</span>
<span class="tx" id="t16" style="left:129px;top:87.60px;font-size:9.7px;color:#35383c;font-weight:400;transform-origin:0 50%;transform:translateY(-50%) scaleX(1.0078)">Insert</span>
<span class="tx" id="t17" style="left:164.5px;top:87.60px;font-size:9.7px;color:#35383c;font-weight:400;transform-origin:0 50%;transform:translateY(-50%) scaleX(0.9753)">Format</span>
<span class="tx" id="t18" style="left:205.6px;top:87.60px;font-size:9.7px;color:#35383c;font-weight:400;transform-origin:0 50%;transform:translateY(-50%) scaleX(0.9487)">Data</span>
<span class="tx" id="t19" style="left:236.3px;top:87.60px;font-size:9.7px;color:#35383c;font-weight:400;transform-origin:0 50%;transform:translateY(-50%) scaleX(0.9645)">Tools</span>
<span class="tx" id="t20" style="left:269px;top:87.60px;font-size:9.7px;color:#35383c;font-weight:400;transform-origin:0 50%;transform:translateY(-50%) scaleX(0.9590)">Extensions</span>
<span class="tx" id="t21" style="left:325.6px;top:87.60px;font-size:9.7px;color:#35383c;font-weight:400;transform-origin:0 50%;transform:translateY(-50%) scaleX(0.9590)">Help</span>
<span class="tx stk" id="t22" style="left:112.3px;top:113.08px;font-size:9.6px;color:#303336;font-weight:400;transform-origin:0 50%;transform:translateY(-50%) scaleX(0.9624)">100%</span>
<span class="tx" id="t23" style="left:169.7px;top:112.60px;font-size:8.6px;color:#555a60;font-weight:700;transform-origin:0 50%;transform:translateY(-50%) scaleX(0.9990)">$</span>
<span class="tx" id="t24" style="left:189.4px;top:112.00px;font-size:8.6px;color:#5a5e63;font-weight:400;transform-origin:0 50%;transform:translateY(-50%) scaleX(0.9990)">%</span>
<span class="tx" id="t25" style="left:251.2px;top:114.30px;font-size:8px;color:#5f6368;font-weight:400;transform-origin:0 50%;transform:translateY(-50%) scaleX(0.8242)">123</span>
<span class="tx stk" id="t26" style="left:280.0px;top:113.09px;font-size:9.7px;color:#3c4045;font-weight:400;transform-origin:0 50%;transform:translateY(-50%) scaleX(0.9766)">Defaul...</span>
<span class="tx" id="t27" style="left:366.3px;top:113.20px;font-size:9.5px;color:#2a2d30;font-weight:400;transform-origin:0 50%;transform:translateY(-50%) scaleX(0.9936)">10</span>
<span class="tx stk" id="t28" style="left:668px;top:77.20px;font-size:9.8px;color:#0f2d4e;font-weight:400;transform-origin:0 50%;transform:translateY(-50%) scaleX(0.9874)">Share</span>
<span class="tx stk" id="t29" style="left:14.8px;top:140.05px;font-size:8.1px;color:#33373a;font-weight:400;transform-origin:0 50%;transform:translateY(-50%) scaleX(0.8530)">1:9</span>
<span class="tx" id="t30" style="left:51.4px;top:206.00px;font-size:10.2px;color:#3a3a3a;font-weight:400;transform-origin:0 50%;transform:translateY(-50%) scaleX(0.9341)">Cut</span>
<span class="tx" id="t31" style="left:51.4px;top:227.00px;font-size:10.2px;color:#3a3a3a;font-weight:400;transform-origin:0 50%;transform:translateY(-50%) scaleX(0.8918)">Copy</span>
<span class="tx" id="t32" style="left:51.4px;top:248.00px;font-size:10.2px;color:#3a3a3a;font-weight:400;transform-origin:0 50%;transform:translateY(-50%) scaleX(0.9064)">Paste</span>
<span class="tx" id="t33" style="left:51.4px;top:269.00px;font-size:10.2px;color:#3a3a3a;font-weight:400;transform-origin:0 50%;transform:translateY(-50%) scaleX(0.9251)">Paste special</span>
<span class="tx" id="t34" style="left:51.4px;top:301.00px;font-size:10.2px;color:#3a3a3a;font-weight:400;transform-origin:0 50%;transform:translateY(-50%) scaleX(0.9210)">Insert 9 rows above</span>
<span class="tx" id="t35" style="left:51.4px;top:321.80px;font-size:10.2px;color:#3a3a3a;font-weight:400;transform-origin:0 50%;transform:translateY(-50%) scaleX(0.9330)">Insert 9 rows below</span>
<span class="tx" id="t36" style="left:51.4px;top:343.00px;font-size:10.2px;color:#3a3a3a;font-weight:400;transform-origin:0 50%;transform:translateY(-50%) scaleX(0.8955)">Delete rows 1 - 9</span>
<span class="tx" id="t37" style="left:51.4px;top:364.20px;font-size:10.2px;color:#3a3a3a;font-weight:400;transform-origin:0 50%;transform:translateY(-50%) scaleX(0.8965)">Clear rows 1 - 9</span>
<span class="tx" id="t38" style="left:51.4px;top:384.80px;font-size:10.2px;color:#3a3a3a;font-weight:400;transform-origin:0 50%;transform:translateY(-50%) scaleX(0.9058)">Hide rows 1 - 9</span>
<span class="tx" id="t39" style="left:51.4px;top:406.20px;font-size:10.2px;color:#3a3a3a;font-weight:400;transform-origin:0 50%;transform:translateY(-50%) scaleX(0.8916)">Resize rows 1 - 9</span>
<span class="tx" id="t40" style="left:51.4px;top:438.60px;font-size:10.2px;color:#3a3a3a;font-weight:400;transform-origin:0 50%;transform:translateY(-50%) scaleX(0.9215)">Create a filter</span>
<span class="tx" id="t41" style="left:51.4px;top:470.00px;font-size:10.2px;color:#3a3a3a;font-weight:400;transform-origin:0 50%;transform:translateY(-50%) scaleX(0.9534)">Conditional formatting</span>
<span class="tx" id="t42" style="left:51.4px;top:491.00px;font-size:10.2px;color:#3a3a3a;font-weight:400;transform-origin:0 50%;transform:translateY(-50%) scaleX(0.9252)">Data validation</span>
<span class="tx" id="t43" style="left:51.4px;top:523.00px;font-size:10.2px;color:#3a3a3a;font-weight:400;transform-origin:0 50%;transform:translateY(-50%) scaleX(0.9355)">View more row actions</span>
<span class="tx" id="t44" style="left:200.4px;top:204.80px;font-size:9.9px;color:#6e6e6e;font-weight:400;transform-origin:0 50%;transform:translateY(-50%) scaleX(0.9317)">Ctrl+X</span>
<span class="tx" id="t45" style="left:200.4px;top:225.80px;font-size:9.9px;color:#6e6e6e;font-weight:400;transform-origin:0 50%;transform:translateY(-50%) scaleX(0.9137)">Ctrl+C</span>
<span class="tx" id="t46" style="left:200.4px;top:246.80px;font-size:9.9px;color:#6e6e6e;font-weight:400;transform-origin:0 50%;transform:translateY(-50%) scaleX(0.9317)">Ctrl+V</span>
<div class="a" style="left:136px;top:14px;width:14px;height:15px;background:linear-gradient(90deg,rgba(255,255,255,0),#fff 85%)"></div>
</body></html>
